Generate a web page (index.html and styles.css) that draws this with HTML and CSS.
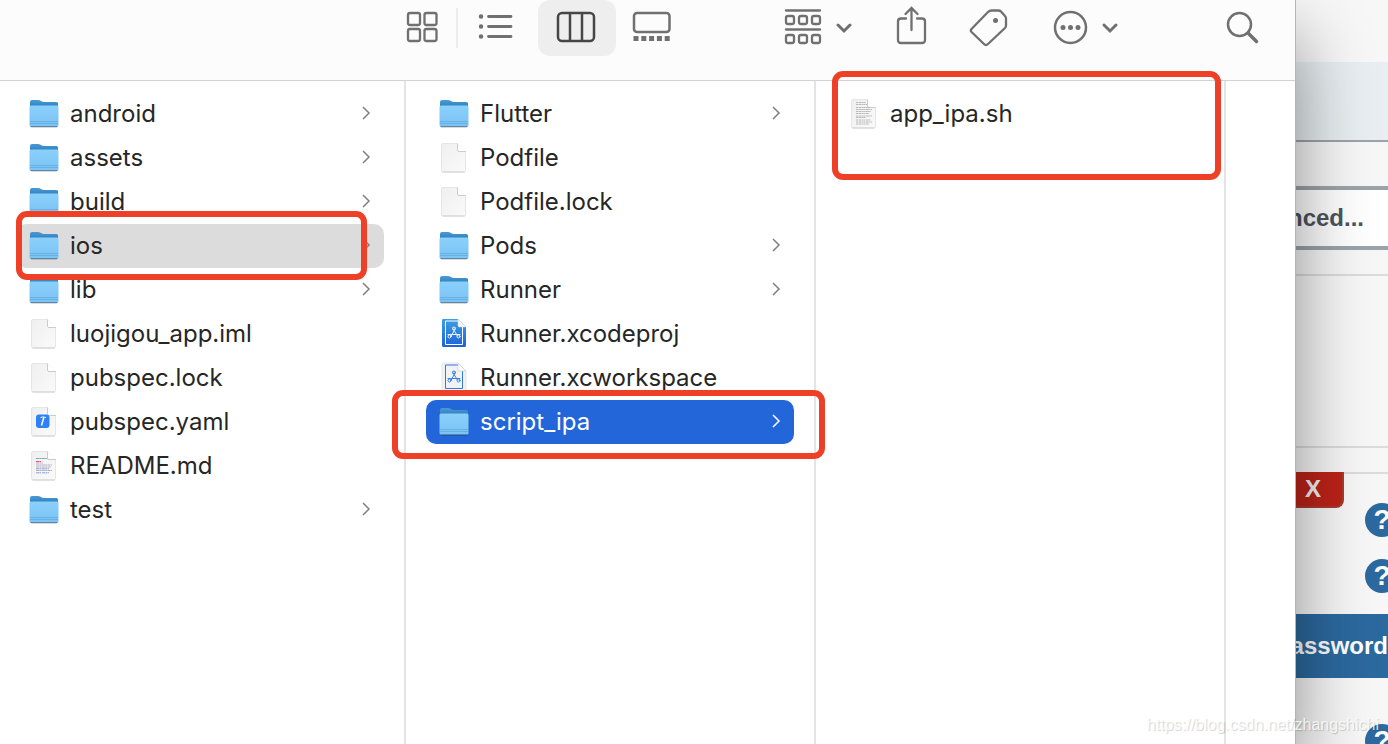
FILE: index.html
```html
<!DOCTYPE html>
<html lang="en">
<head>
    <meta charset="UTF-8">
    <meta name="viewport" content="width=device-width, initial-scale=1.0">
    <title>ios</title>
    <link rel="stylesheet" href="styles.css">
</head>
<body>

    <!-- Shared icons -->
    <svg class="sprite" aria-hidden="true">
        <defs>
            <linearGradient id="folderBack" x1="0" y1="0" x2="0" y2="1">
                <stop offset="0" stop-color="#4a9bd3"/>
                <stop offset=".25" stop-color="#2f80c0"/>
            </linearGradient>
            <linearGradient id="folderFront" x1="0" y1="0" x2="0" y2="1">
                <stop offset="0" stop-color="#8bd0fb"/>
                <stop offset="1" stop-color="#7ac3f4"/>
            </linearGradient>
            <linearGradient id="paper" x1="0" y1="0" x2="1" y2="1">
                <stop offset="0" stop-color="#efefef"/>
                <stop offset="1" stop-color="#fafafa"/>
            </linearGradient>
            <linearGradient id="blueprint" x1="0" y1="0" x2="0" y2="1">
                <stop offset="0" stop-color="#3f9fe0"/>
                <stop offset="1" stop-color="#1c62d8"/>
            </linearGradient>
        </defs>
        <symbol id="folder" viewBox="0 0 32 32">
            <path d="M2 28V4q0-2 2-2h6q1.500 0 3 1t3 1h12.500q1.500 0 1.500 1.500V28z" fill="url(#folderBack)"/>
            <path d="M1.500 9q0-1.500 1.500-1.500h26q1.500 0 1.500 1.500V27q0 1.500-1.500 1.500H3Q1.500 28.500 1.500 27z" fill="url(#folderFront)"/>
            <path d="M2 23.500h28M2 25.500h28" stroke="#62abde" stroke-width=".8"/>
            <path d="M2.500 28.500h27" stroke="#5a88ab"/>
            <path d="M3 29.500h26" stroke="#000" stroke-opacity=".15"/>
        </symbol>
        <symbol id="doc" viewBox="0 0 32 32">
            <path d="M5 1.500h14.500l8 8V28.500q0 1.500-1.500 1.500H5q-1.500 0-1.500-1.500V3q0-1.500 1.500-1.500z" fill="url(#paper)" stroke="#e6e6e6"/>
            <path d="M4.500 30h22" stroke="#cfcfcf"/>
            <path d="M19.500 1.500v6.500q0 1.500 1.500 1.500h7z" fill="#fff"/>
            <path d="M19.500 1.500v6.500q0 1.500 1.500 1.500h7" fill="none" stroke="#cccccc"/>
        </symbol>
        <symbol id="appTools" viewBox="0 0 14 14">
            <g fill="none" stroke="currentColor" stroke-linecap="round">
                <path d="M8.500 2L4 10.500M5.500 2l5 8M1 8.500h12"/>
                <circle cx="7" cy="2.500" r="1.500"/>
                <circle cx="2.500" cy="10.500" r="1.500"/>
                <circle cx="11.500" cy="10.500" r="1.500"/>
            </g>
        </symbol>
        <symbol id="xcodeproj" viewBox="0 0 32 32">
            <path d="M5 1h15l8 8v18.500q0 1.500-1.500 1.500H5.500Q4 29 4 27.500V2q0-1 1-1z" fill="url(#blueprint)"/>
            <path d="M20 3H7.500v23.500h17V9" fill="none" stroke="#fff"/>
            <path d="M20 1v6.500Q20 9 21.500 9H28z" fill="#f5f5f5" stroke="#d2dce6" stroke-width=".5"/>
            <use href="#appTools" x="9" y="8" width="14" height="14" color="#e6f2ff"/>
        </symbol>
        <symbol id="xcworkspace" viewBox="0 0 32 32">
            <path d="M5 1h15l8 8v18.500q0 1.500-1.500 1.500H5.500Q4 29 4 27.500V2q0-1 1-1z" fill="#f1f2f4" stroke="#e6e6e6"/>
            <path d="M20 3H7.500v23.500h17V9" fill="none" stroke="#2d7be0"/>
            <path d="M20 1v6.500Q20 9 21.500 9H28z" fill="#fff" stroke="#cccccc" stroke-width=".7"/>
            <use href="#appTools" x="9" y="8" width="14" height="14" color="#3a82e4"/>
        </symbol>
        <symbol id="yaml" viewBox="0 0 32 32">
            <use href="#doc" width="32" height="32"/>
            <rect x="8" y="8.500" width="13.500" height="13.500" rx="3" fill="#2e80f5"/>
            <path d="M15.800 11.500l-2.300 8" fill="none" stroke="#fff" stroke-width="1.500"/>
            <path d="M12.500 11.500q2-1.200 5.500 0" fill="none" stroke="#fff"/>
        </symbol>
        <symbol id="readme" viewBox="0 0 32 32">
            <use href="#doc" width="32" height="32"/>
            <g fill="none" stroke-dasharray="3 .4 2 .4">
                <path d="M8 8.500h11" stroke="#5fb8a8"/>
                <path d="M8 11.500h5" stroke="#e0508a"/>
                <path d="M8 13h7" stroke="#d080a0" stroke-width=".7"/>
                <path d="M8 15h16M8 17h15M8 20.500h16" stroke="#b0b0bc"/>
                <path d="M8 18.800h13" stroke="#a590d8"/>
                <path d="M8 22.800h5M14 22.800h7" stroke="#7ba4ea"/>
            </g>
        </symbol>
        <symbol id="script" viewBox="0 0 32 32">
            <use href="#doc" width="32" height="32"/>
            <path d="M8 4.500h10M8 6.500h11M8 9.500h14M8 11.500h16M8 13.500h15M8 15.500h13M8 18h16M8 19.500h10M8 22h15M8 24h16M8 26h13" fill="none" stroke="#b8b8b8" stroke-dasharray="2 .5 3 .4 1 .4"/>
        </symbol>
        <symbol id="chevron" viewBox="0 0 10 14">
            <path d="M2 1l6 6-6 6" fill="none" stroke="currentColor" stroke-width="1.500"/>
        </symbol>
    </svg>

    <main class="window">
        <header class="toolbar">
            <div class="views">
                <button class="view" aria-label="Icons">
                    <svg width="78" height="56" fill="none" stroke="currentColor" stroke-width="2.300">
                        <rect x="26" y="13" width="12" height="12" rx="2"/>
                        <rect x="42.500" y="13" width="12" height="12" rx="2"/>
                        <rect x="26" y="29" width="12" height="12" rx="2"/>
                        <rect x="42.500" y="29" width="12" height="12" rx="2"/>
                        <path d="M75 8v40" stroke="#ededed" stroke-width="2"/>
                    </svg>
                </button>
                <button class="view" aria-label="List">
                    <svg width="78" height="56" fill="none" stroke="currentColor">
                        <path d="M28.500 16.500h22.500M28.500 26.500h22.500M28.500 36.500h22.500" stroke-width="2.800" stroke-linecap="round"/>
                        <path d="M21 16.500h.01M21 26.500h.01M21 36.500h.01" stroke-width="4.500" stroke-linecap="round"/>
                    </svg>
                </button>
                <button class="view active" aria-label="Columns" aria-pressed="true">
                    <svg width="78" height="56" fill="none" stroke="currentColor" stroke-width="2.500">
                        <rect x="20" y="13" width="36" height="28" rx="4"/>
                        <path d="M32 13v28M44 13v28"/>
                    </svg>
                </button>
                <button class="view" aria-label="Gallery">
                    <svg width="78" height="56" fill="none" stroke="currentColor">
                        <rect x="18" y="13" width="35.500" height="19" rx="3" stroke-width="2.500"/>
                        <path d="M17.500 38.500h37" stroke-width="5" stroke-dasharray="5 2.800"/>
                    </svg>
                </button>
            </div>
            <button class="tool group" aria-label="Group">
                <svg width="76" height="56" fill="none" stroke="currentColor" stroke-width="2.300" stroke-linecap="round">
                    <path d="M6 10.500h34M6 29.500h34"/>
                    <rect x="6" y="16" width="8" height="8" rx="2"/>
                    <rect x="19" y="16" width="8" height="8" rx="2"/>
                    <rect x="32" y="16" width="8" height="8" rx="2"/>
                    <rect x="6" y="35" width="8" height="8" rx="2"/>
                    <rect x="19" y="35" width="8" height="8" rx="2"/>
                    <rect x="32" y="35" width="8" height="8" rx="2"/>
                    <path d="M58 25l6 6 6-6" stroke-width="3"/>
                </svg>
            </button>
            <button class="tool" aria-label="Share">
                <svg width="40" height="56" fill="none" stroke="currentColor" stroke-width="2.300" stroke-linecap="round">
                    <path d="M14 18.500H9q-3 0-3 3V40q0 3 3 3h21q3 0 3-3V21.500q0-3-3-3h-5"/>
                    <path d="M19.500 30V8.500M13.500 14l6-6 6 6"/>
                </svg>
            </button>
            <button class="tool" aria-label="Tags">
                <svg width="42" height="56" fill="none" stroke="currentColor" stroke-width="2.300" stroke-linejoin="round">
                    <path d="M3.500 29L20 12q1.500-1.500 3.500-1.500h7q1.500 0 2.500 1l4 4.500q1 1 1 2.500v7q0 1.500-1 2.500L20 44q-2 2-4 0L3.500 32q-1.500-1.500 0-3z"/>
                    <circle cx="27.500" cy="20.500" r="2.500" fill="currentColor" stroke="none"/>
                </svg>
            </button>
            <button class="tool" aria-label="More">
                <svg width="76" height="56" fill="none" stroke="currentColor" stroke-linecap="round">
                    <circle cx="24.500" cy="27.500" r="15.500" stroke-width="2.500"/>
                    <path d="M17 27.500h.01M24.500 27.500h.01M32 27.500h.01" stroke-width="5"/>
                    <path d="M58 25l6 6 6-6" stroke-width="3"/>
                </svg>
            </button>
            <button class="tool search" aria-label="Search">
                <svg width="40" height="56" fill="none" stroke="currentColor" stroke-linecap="round">
                    <circle cx="17.500" cy="24.500" r="11.500" stroke-width="2.500"/>
                    <path d="M26 33l8.500 8.500" stroke-width="3.500"/>
                </svg>
            </button>
        </header>

        <div class="columns">
            <ul class="column first">
                <li><button class="row"><svg class="icon"><use href="#folder"/></svg><span>android</span><svg class="chevron"><use href="#chevron"/></svg></button></li>
                <li><button class="row"><svg class="icon"><use href="#folder"/></svg><span>assets</span><svg class="chevron"><use href="#chevron"/></svg></button></li>
                <li><button class="row"><svg class="icon"><use href="#folder"/></svg><span>build</span><svg class="chevron"><use href="#chevron"/></svg></button></li>
                <li class="marked mark-ios"><button class="row open"><svg class="icon"><use href="#folder"/></svg><span>ios</span><svg class="chevron"><use href="#chevron"/></svg></button></li>
                <li><button class="row"><svg class="icon"><use href="#folder"/></svg><span>lib</span><svg class="chevron"><use href="#chevron"/></svg></button></li>
                <li><button class="row"><svg class="icon"><use href="#doc"/></svg><span>luojigou_app.iml</span></button></li>
                <li><button class="row"><svg class="icon"><use href="#doc"/></svg><span>pubspec.lock</span></button></li>
                <li><button class="row"><svg class="icon"><use href="#yaml"/></svg><span>pubspec.yaml</span></button></li>
                <li><button class="row"><svg class="icon"><use href="#readme"/></svg><span>README.md</span></button></li>
                <li><button class="row"><svg class="icon"><use href="#folder"/></svg><span>test</span><svg class="chevron"><use href="#chevron"/></svg></button></li>
            </ul>
            <ul class="column">
                <li><button class="row"><svg class="icon"><use href="#folder"/></svg><span>Flutter</span><svg class="chevron"><use href="#chevron"/></svg></button></li>
                <li><button class="row"><svg class="icon"><use href="#doc"/></svg><span>Podfile</span></button></li>
                <li><button class="row"><svg class="icon"><use href="#doc"/></svg><span>Podfile.lock</span></button></li>
                <li><button class="row"><svg class="icon"><use href="#folder"/></svg><span>Pods</span><svg class="chevron"><use href="#chevron"/></svg></button></li>
                <li><button class="row"><svg class="icon"><use href="#folder"/></svg><span>Runner</span><svg class="chevron"><use href="#chevron"/></svg></button></li>
                <li><button class="row"><svg class="icon"><use href="#xcodeproj"/></svg><span>Runner.xcodeproj</span></button></li>
                <li><button class="row"><svg class="icon"><use href="#xcworkspace"/></svg><span>Runner.xcworkspace</span></button></li>
                <li class="marked mark-script"><button class="row selected"><svg class="icon"><use href="#folder"/></svg><span>script_ipa</span><svg class="chevron"><use href="#chevron"/></svg></button></li>
            </ul>
            <ul class="column">
                <li class="marked mark-file"><button class="row"><svg class="icon"><use href="#script"/></svg><span>app_ipa.sh</span></button></li>
            </ul>
            <div></div>
        </div>
    </main>

    <!-- Page behind the window -->
    <aside class="behind">
        <div class="behind-header"></div>
        <button class="advanced">Advanced...</button>
        <div class="behind-panel"></div>
        <div class="behind-form">
            <button class="delete">X</button>
            <div class="helps">
                <button class="help" aria-label="Help">?</button>
                <button class="help" aria-label="Help">?</button>
            </div>
        </div>
        <button class="password">Password</button>
        <div class="helps last">
            <button class="help" aria-label="Help">?</button>
        </div>
    </aside>

    <div class="watermark">https://blog.csdn.net/zhangshichi</div>

</body>
</html>
```
FILE: styles.css
```css
* {
    box-sizing: border-box;
}

body {
    margin: 0;
    height: 100vh;
    display: flex;
    position: relative;
    overflow: hidden;
    background-color: #f7f7f7;
    font-family: Inter, "Liberation Sans", sans-serif;
    font-size: 24px;
    color: #262626;
}

button {
    margin: 0;
    padding: 0;
    border: none;
    background: none;
    font: inherit;
    color: inherit;
}

.sprite {
    position: absolute;
    width: 0;
    height: 0;
}

.window {
    flex: 1;
    min-width: 0;
    display: flex;
    flex-direction: column;
    position: relative;
    z-index: 1;
    background-color: #fff;
    border-right: 1px solid #b4b4b4;
    box-shadow: 0 36px 70px rgba(0, 0, 0, 0.44);
}

/* Toolbar */
.toolbar {
    display: flex;
    justify-content: flex-end;
    gap: 36px;
    padding: 0 33px 24px 0;
    background-color: #fcfcfc;
    border-bottom: 1px solid #d2d2d2;
    color: #707070;
}

.toolbar svg {
    display: block;
}

.views {
    display: flex;
}

.view.active {
    background-color: #eeeeee;
    border-radius: 12px;
    color: #464646;
}

.group {
    margin-left: 50px;
}

.search {
    margin-left: 64px;
}

/* Columns */
.columns {
    flex: 1;
    display: grid;
    grid-template-columns: 406fr 410fr 410fr 69fr;
}

.column {
    min-width: 0;
    margin: 0;
    padding: 11px 20px 0 20px;
    list-style: none;
    border-right: 2px solid #e4e4e4;
}

.column.first {
    padding-left: 16px;
}

.row {
    display: flex;
    align-items: center;
    gap: 10px;
    width: 100%;
    height: 44px;
    padding: 0 13px 2px 12px;
    border-radius: 10px;
    text-align: left;
}

.row span {
    flex: 1;
    white-space: nowrap;
}

.row.open {
    background-color: #dcdcdc;
}

.row.selected {
    background-color: #2366d9;
    color: #fff;
}

.icon {
    width: 32px;
    height: 32px;
    margin-top: 2px;
}

.chevron {
    width: 10px;
    height: 14px;
    color: #808080;
}

.selected .chevron {
    color: #fff;
}

/* Red frames drawn over the list */
.marked {
    position: relative;
}

.marked::after {
    content: "";
    position: absolute;
    z-index: 2;
    border: 6px solid #ee4026;
    border-radius: 11px;
    pointer-events: none;
}

.mark-ios::after {
    inset: -13px 17px -12px 0;
}

.mark-script::after {
    inset: -10px -31px -15px -34px;
}

.mark-file::after {
    inset: -21px -17px -44px -4px;
}

/* Page behind the window */
.behind {
    width: 92px;
    display: flex;
    flex-direction: column;
    font-family: "Liberation Sans", Arial, sans-serif;
    font-weight: bold;
}

.behind-header {
    flex: none;
    height: 80px;
    margin-top: 62px;
    background-color: #e8eef1;
    border-bottom: 2px solid #9ba4aa;
}

.advanced {
    display: flex;
    flex: none;
    justify-content: flex-end;
    align-items: center;
    height: 64px;
    margin-top: 44px;
    padding-right: 24px;
    background-color: #fff;
    border-top: 4px solid #9ba4aa;
    border-bottom: 4px solid #9ba4aa;
    color: #4d545c;
}

.behind-panel {
    flex: none;
    height: 174px;
    margin: 24px 0;
    border-top: 2px solid #dcdcdc;
    border-bottom: 2px solid #dcdcdc;
}

.behind-form {
    flex: none;
    display: flex;
    justify-content: space-between;
    height: 142px;
    border-top: 2px solid #dcdcdc;
}

.delete {
    width: 48px;
    height: 36px;
    margin-top: -2px;
    padding-right: 12px;
    background-color: #bd2318;
    border: solid #a93a30;
    border-width: 0 2px 2px 0;
    border-radius: 0 0 8px 0;
    color: #f4f4f4;
}

.helps {
    display: flex;
    flex-direction: column;
    align-items: flex-end;
    gap: 22px;
    margin-right: -11px;
    padding-top: 29px;
}

.helps.last {
    padding-top: 46px;
}

.help {
    flex: none;
    width: 34px;
    height: 34px;
    background-color: #2c699f;
    border-radius: 50%;
    color: #fff;
    font-size: 28px;
    line-height: 34px;
}

.password {
    display: flex;
    flex: none;
    justify-content: flex-end;
    align-items: center;
    height: 64px;
    background-color: #2c699f;
    color: #fff;
}

.watermark {
    position: absolute;
    z-index: 3;
    right: 9px;
    bottom: 10px;
    font-family: "Liberation Sans", Arial, sans-serif;
    font-size: 16px;
    color: rgba(255, 255, 255, 0.8);
    text-shadow: 1px 1px 1px rgba(0, 0, 0, 0.18);
}
```
